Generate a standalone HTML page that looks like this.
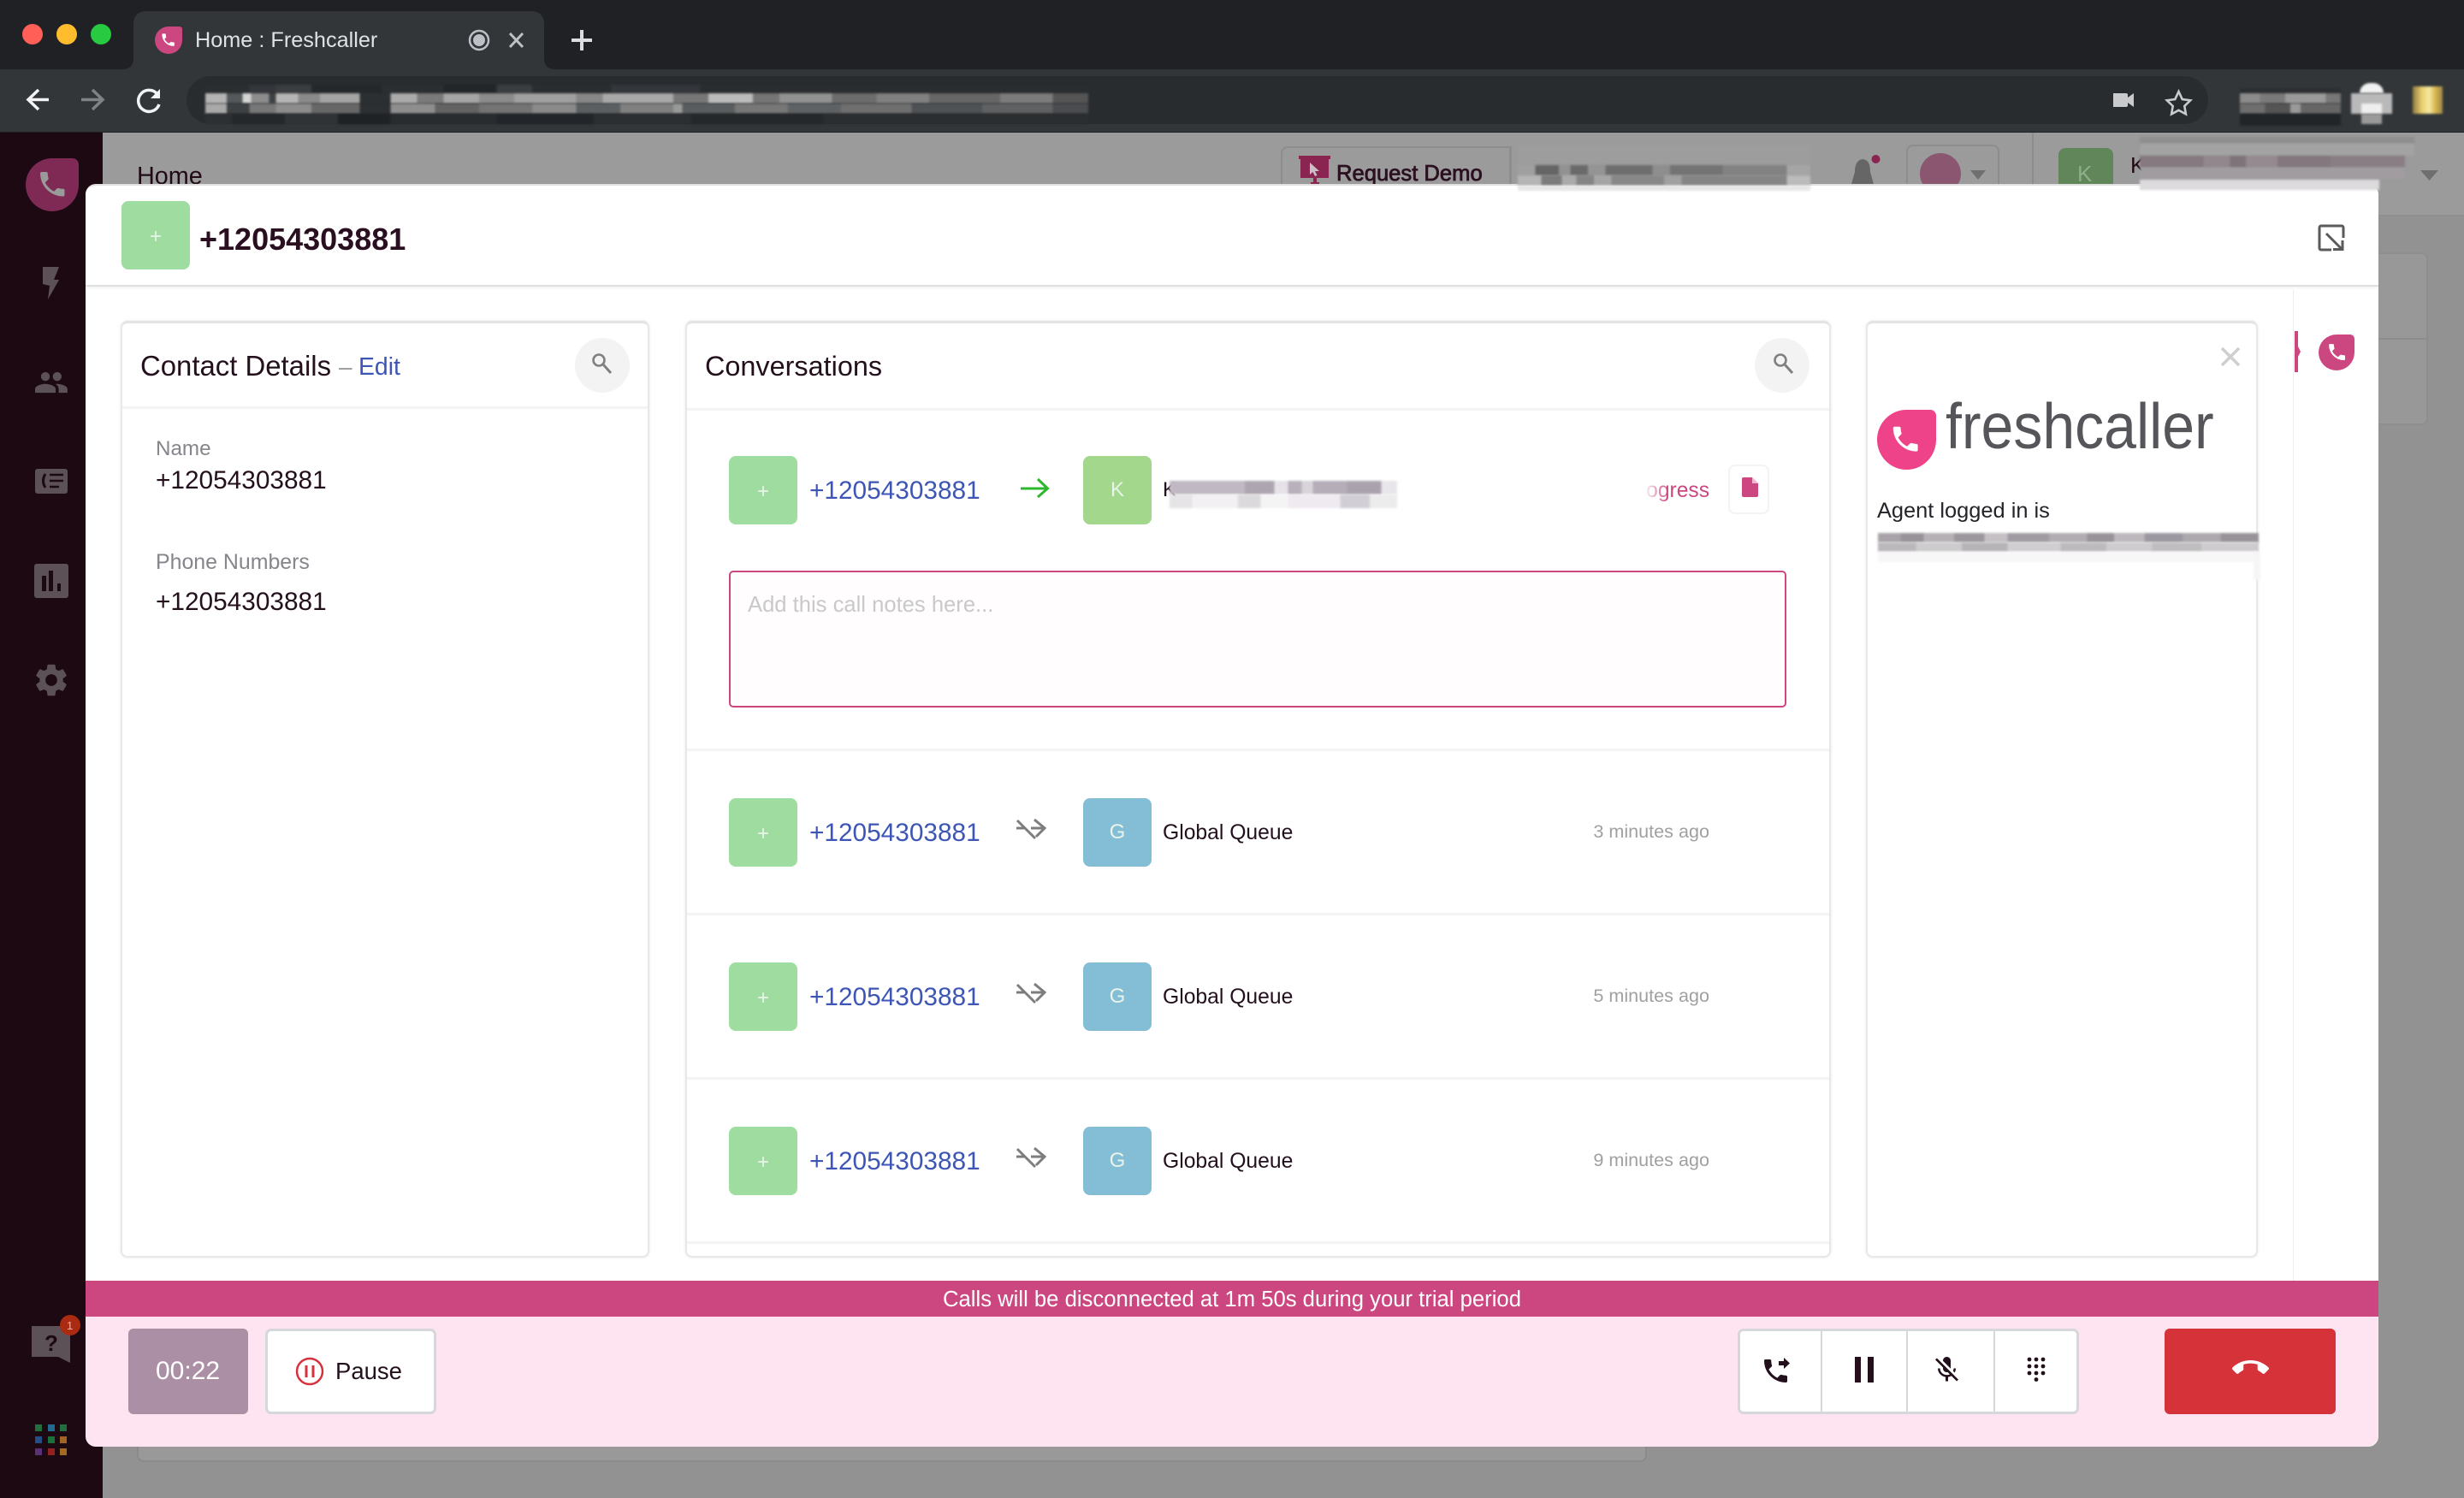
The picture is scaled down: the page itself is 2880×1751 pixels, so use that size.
<!DOCTYPE html>
<html lang="en"><head><meta charset="utf-8"><title>Home : Freshcaller</title>
<style>
html,body{margin:0;padding:0;background:#929292}
#p{position:relative;width:2880px;height:1751px;overflow:hidden;font-family:"Liberation Sans",Arial,sans-serif;color:#24101d;background:#929292}
#p div{position:absolute;box-sizing:border-box}
.t{position:absolute;white-space:nowrap;line-height:1}
.av{width:80px;height:80px;border-radius:8px;color:#e8f4ea;display:flex;align-items:center;justify-content:center;font-size:24px}
.g{background:#9edca0;padding-top:3px}.b{background:#84bdd6}.k{background:#a2d78c}
.blue{color:#3d55b5}
.lab{color:#85858c}
.card{background:#fff;border:2px solid #e8e8e8;border-top:3px solid #e4e4e4;border-radius:8px;box-shadow:0 0 3px rgba(0,0,0,.1)}
.sep{height:3px;background:#f3f3f3}
.sb{width:64px;height:64px;border-radius:50%;background:#f3f3f3}
.mz{filter:blur(1.3px)}
svg{position:absolute;left:0;top:0}
</style></head><body>
<div id="p">
<!-- browser chrome -->
<div style="left:0;top:0;width:2880px;height:81px;background:#202124"></div>
<div style="left:0;top:81px;width:2880px;height:73px;background:#323639"></div>
<div style="left:0;top:154px;width:2880px;height:1px;background:#1f2022"></div>
<div style="left:218px;top:89px;width:2363px;height:56px;border-radius:28px;background:#292c2f"></div>

<!-- url mosaic -->
<div class="mz" style="left:240px;top:99px;width:1032px;height:10px;background:linear-gradient(90deg,#2b2e31 0 5%,#33363a 0 8%,#3a3d40 0 12%,#25282b 0 20%,#2b2e31 0 27%,#232629 0 33%,#3a3d3f 0 37%,#2a2d30 0 46%,#33363a 0 56%,#2a2d30 0 100%)"></div>
<div class="mz" style="left:240px;top:109px;width:1032px;height:12px;background:linear-gradient(90deg,#b4b4b4 0 2.4%,#55585a 0 4.2%,#d5d5d5 0 5.2%,#8c8c8c 0 7.2%,#3e4143 0 8%,#b5b5b5 0 10.5%,#8a8a8a 0 13%,#a4a4a4 0 17.5%,#2c2f32 0 21%,#aaa 0 24%,#7a7a7a 0 27%,#a5a5a5 0 31%,#8b8b8b 0 35%,#a0a0a0 0 42%,#878787 0 45%,#a8a8a8 0 53%,#777 0 57%,#bbb 0 62%,#757575 0 65%,#929292 0 71%,#6c6c6c 0 76%,#808080 0 82%,#666 0 90%,#7c7c7c 0 96%,#555 0 100%)"></div>
<div class="mz" style="left:240px;top:121px;width:1032px;height:12px;background:linear-gradient(90deg,#a9a9a9 0 2.4%,#3e4143 0 5%,#777 0 8%,#8c8c8c 0 12%,#676767 0 17.5%,#2c2f32 0 21%,#8e8e8e 0 26%,#636363 0 31%,#747474 0 37%,#8a8a8a 0 42%,#5c5f61 0 47%,#808080 0 53%,#999 0 54%,#5a5d5f 0 60%,#777 0 66%,#5f6264 0 72%,#6f6f6f 0 80%,#4f5254 0 88%,#5f6163 0 96%,#4a4c4f 0 100%)"></div>
<div class="mz" style="left:240px;top:133px;width:1032px;height:12px;background:linear-gradient(90deg,#2d3033 0 3%,#25282b 0 9%,#303336 0 15%,#1f2225 0 21%,#292c2f 0 33%,#22252a 0 44%,#2c2f32 0 55%,#25282a 0 70%,#2b2e30 0 100%)"></div>
<!-- toolbar right mosaics -->
<div class="mz" style="left:2618px;top:103px;width:118px;height:12px;background:#2c2f32"></div>
<div class="mz" style="left:2618px;top:109px;width:118px;height:12px;background:linear-gradient(90deg,#8b8b8b 0 20%,#7a7a7a 0 45%,#9a9a9a 0 85%,#777 0 100%)"></div>
<div class="mz" style="left:2618px;top:121px;width:118px;height:12px;background:linear-gradient(90deg,#6e6e6e 0 25%,#555 0 50%,#9a9a9a 0 60%,#666 0 100%)"></div>
<div class="mz" style="left:2618px;top:133px;width:118px;height:14px;background:#222528"></div>
<div class="mz" style="left:2758px;top:97px;width:28px;height:12px;border-radius:14px 14px 0 0;background:#f2f2f2"></div>
<div class="mz" style="left:2748px;top:109px;width:48px;height:24px;background:#b9b9b9"></div>
<div class="mz" style="left:2760px;top:121px;width:24px;height:12px;background:#eee"></div>
<div class="mz" style="left:2760px;top:133px;width:24px;height:12px;background:#9a9a9a"></div>
<div class="mz" style="left:2820px;top:101px;width:35px;height:32px;background:linear-gradient(90deg,#8a7a40,#e8cd6e 30%,#f5e9a0 55%,#d9b851 75%,#9a8548)"></div>

<!-- background app -->
<div style="left:120px;top:155px;width:2760px;height:98px;background:#9b9b9b;border-bottom:2px solid #8f8f8f"></div>
<div style="left:2760px;top:295px;width:78px;height:202px;background:#989898;border:2px solid #8e8e8e;border-radius:8px"></div>
<div style="left:2760px;top:395px;width:78px;height:2px;background:#8c8c8c"></div>
<div style="left:160px;top:1500px;width:1765px;height:209px;background:#999;border:2px solid #8b8b8b;border-radius:8px"></div>
<span class="t" style="left:160px;top:192px;font-size:28.8px;color:#1f0a15">Home</span>
<div style="left:1497px;top:171px;width:270px;height:60px;border:2px solid #8d8d8d;border-radius:8px 0 0 0;border-bottom:0"></div>
<div style="left:1764px;top:172px;width:2px;height:50px;background:#8d8d8d"></div>
<span class="t" style="left:1562px;top:191px;font-size:25.6px;color:#2a1020;-webkit-text-stroke:.8px #2a1020">Request Demo</span>
<div style="left:2228px;top:169px;width:109px;height:60px;border:2px solid #8d8d8d;border-radius:8px 8px 0 0"></div>
<div style="left:2244px;top:179px;width:48px;height:48px;border-radius:50%;background:#8a5670"></div>
<div style="left:2375px;top:155px;width:2px;height:70px;background:#8c8c8c"></div>
<div style="left:2406px;top:173px;width:64px;height:64px;border-radius:8px;background:#60865a"></div>
<span class="t" style="left:2428px;top:190px;font-size:26px;color:#8fae8a">K</span>
<span class="t" style="left:2490px;top:180px;font-size:26px;color:#1f0a15">K</span>

<!-- sidebar -->
<div style="left:0;top:155px;width:120px;height:1596px;background:#1c0911"></div>
<div style="left:30px;top:185px;width:62px;height:62px;background:#7f2a55;border-radius:50% 12% 50% 50%"></div>
<div style="left:37px;top:1550px;width:45px;height:36px;background:#5b5157"></div>
<span class="t" style="left:52px;top:1557px;font-size:26px;font-weight:bold;color:#1c0911">?</span>
<div style="left:70px;top:1537px;width:24px;height:24px;border-radius:50%;background:#ab2a12"></div>
<span class="t" style="left:78px;top:1543px;font-size:13px;color:#e6b3a8">1</span>
<div style="left:41px;top:1665px;width:8px;height:8px;background:#226e40"></div><div style="left:56px;top:1665px;width:8px;height:8px;background:#236a90"></div><div style="left:70px;top:1665px;width:8px;height:8px;background:#226e40"></div>
<div style="left:41px;top:1679px;width:8px;height:8px;background:#274e84"></div><div style="left:56px;top:1679px;width:8px;height:8px;background:#19703c"></div><div style="left:70px;top:1679px;width:8px;height:8px;background:#a06423"></div>
<div style="left:41px;top:1693px;width:8px;height:8px;background:#573277"></div><div style="left:56px;top:1693px;width:8px;height:8px;background:#912222"></div><div style="left:70px;top:1693px;width:8px;height:8px;background:#a36a24"></div>

<!-- modal -->
<div style="left:100px;top:215px;width:2680px;height:1476px;background:#fff;border-radius:12px;overflow:hidden;border-top:2px solid #e0e0e0"></div>
<div style="left:100px;top:333px;width:2680px;height:2px;background:#dfdfdf"></div>
<div style="left:100px;top:335px;width:2680px;height:4px;background:linear-gradient(#f4f4f4,#fff)"></div>
<div class="av g" style="left:142px;top:235px">+</div>
<span class="t" style="left:233px;top:262px;font-size:36px;font-weight:bold;color:#2a0f20">+12054303881</span>

<!-- contact card -->
<div class="card" style="left:141px;top:375px;width:618px;height:1095px"></div>
<div class="sep" style="left:143px;top:475px;width:614px"></div>
<span class="t" style="left:164px;top:412px;font-size:32.9px;color:#24101d">Contact Details</span>
<span class="t" style="left:396px;top:415px;font-size:28px;color:#999">–</span>
<span class="t blue" style="left:419px;top:415px;font-size:28.4px">Edit</span>
<div class="sb" style="left:672px;top:395px"></div>
<span class="t lab" style="left:182px;top:513px;font-size:24.2px">Name</span>
<span class="t" style="left:182px;top:547px;font-size:29.8px">+12054303881</span>
<span class="t lab" style="left:182px;top:645px;font-size:24.9px">Phone Numbers</span>
<span class="t" style="left:182px;top:689px;font-size:29.8px">+12054303881</span>

<!-- conversations card -->
<div class="card" style="left:801px;top:375px;width:1339px;height:1095px;overflow:hidden"></div>
<div class="sep" style="left:803px;top:477px;width:1335px"></div>
<div class="sep" style="left:803px;top:875px;width:1335px"></div>
<div class="sep" style="left:803px;top:1067px;width:1335px"></div>
<div class="sep" style="left:803px;top:1259px;width:1335px"></div>
<div class="sep" style="left:803px;top:1451px;width:1335px"></div>
<span class="t" style="left:824px;top:412px;font-size:32.4px;color:#24101d">Conversations</span>
<div class="sb" style="left:2051px;top:395px"></div>

<div class="av g" style="left:852px;top:533px">+</div>
<span class="t blue" style="left:946px;top:559px;font-size:29.8px">+12054303881</span>
<div class="av k" style="left:1266px;top:533px">K</div>
<span class="t" style="left:1359px;top:561px;font-size:24.4px">K</span>
<div class="mz" style="left:1367px;top:562px;width:266px;height:16px;background:linear-gradient(90deg,#c0b8c2 0 33%,#ada5b0 0 46%,#e6e2e8 0 52%,#b8b0ba 0 58%,#d8d4da 0 63%,#b5adb8 0 78%,#aaa3ae 0 93%,#e8e6ea 0 100%)"></div>
<div class="mz" style="left:1367px;top:578px;width:266px;height:16px;background:linear-gradient(90deg,#e6e4e6 0 10%,#f2f0f2 0 30%,#dcd9dc 0 40%,#f5f4f5 0 52%,#eeeaef 0 75%,#d2ced6 0 88%,#ececec 0 100%)"></div>
<span class="t" style="right:882px;top:562px;font-size:24.6px;color:#cc4680">ogress</span>
<div style="left:1914px;top:555px;width:34px;height:36px;background:linear-gradient(90deg,#fff 20%,rgba(255,255,255,.1))"></div>
<div style="left:2020px;top:543px;width:48px;height:58px;border:2px solid #f3f3f3;border-radius:8px"></div>
<div style="left:852px;top:667px;width:1236px;height:160px;background:#fffdfe;border:2px solid #cc4680;border-radius:5px"></div>
<span class="t" style="left:874px;top:695px;font-size:25.6px;color:#c9c9c9">Add this call notes here...</span>

<div class="av g" style="left:852px;top:933px">+</div>
<span class="t blue" style="left:946px;top:959px;font-size:29.8px">+12054303881</span>
<div class="av b" style="left:1266px;top:933px">G</div>
<span class="t" style="left:1359px;top:962px;font-size:24.7px">Global Queue</span>
<span class="t" style="right:882px;top:961px;font-size:21.6px;color:#a0a0a0">3 minutes ago</span>

<div class="av g" style="left:852px;top:1125px">+</div>
<span class="t blue" style="left:946px;top:1151px;font-size:29.8px">+12054303881</span>
<div class="av b" style="left:1266px;top:1125px">G</div>
<span class="t" style="left:1359px;top:1154px;font-size:24.7px">Global Queue</span>
<span class="t" style="right:882px;top:1153px;font-size:21.6px;color:#a0a0a0">5 minutes ago</span>

<div class="av g" style="left:852px;top:1317px">+</div>
<span class="t blue" style="left:946px;top:1343px;font-size:29.8px">+12054303881</span>
<div class="av b" style="left:1266px;top:1317px">G</div>
<span class="t" style="left:1359px;top:1346px;font-size:24.7px">Global Queue</span>
<span class="t" style="right:882px;top:1345px;font-size:21.6px;color:#a0a0a0">9 minutes ago</span>

<!-- agent card -->
<div class="card" style="left:2181px;top:375px;width:458px;height:1095px"></div>
<div style="left:2194px;top:479px;width:69px;height:70px;background:#ee4289;border-radius:50% 10% 50% 50%"></div>
<span class="t" style="left:2274px;top:468px;font-size:68px;color:#55555a;transform:scaleY(1.1);transform-origin:left bottom">freshcaller</span>
<span class="t" style="left:2194px;top:585px;font-size:25.4px;color:#24232a">Agent logged in is</span>
<div class="mz" style="left:2195px;top:623px;width:445px;height:11px;background:linear-gradient(90deg,#a8a3a8 0 6%,#989399 0 12%,#b5b1b5 0 20%,#9c979d 0 28%,#c4c0c4 0 34%,#a09ba2 0 45%,#b0acb1 0 55%,#989399 0 62%,#bcb8bd 0 70%,#9c98a2 0 80%,#aca8ad 0 90%,#989399 0 100%)"></div>
<div class="mz" style="left:2195px;top:634px;width:445px;height:11px;background:linear-gradient(90deg,#bbb8bb 0 10%,#cdcbcd 0 22%,#b7b4b7 0 34%,#d0ced0 0 48%,#bdbabd 0 60%,#cecccf 0 72%,#bfbdbf 0 85%,#cecccf 0 100%)"></div>
<div class="mz" style="left:2195px;top:645px;width:445px;height:12px;background:#f8f7f8"></div>
<div class="mz" style="left:2634px;top:645px;width:8px;height:33px;background:#f6f6f6"></div>

<div style="left:2680px;top:339px;width:1px;height:1158px;background:#eeeeee"></div>
<div style="left:2682px;top:387px;width:4px;height:48px;background:#cc4680"></div>
<div style="left:2710px;top:391px;width:42px;height:42px;background:#cc4680;border-radius:50% 12% 50% 50%"></div>

<!-- bottom bars -->
<div style="left:100px;top:1497px;width:2680px;height:42px;background:#cc4680"></div>
<span class="t" style="left:1102px;top:1507px;font-size:25.66px;color:#fff">Calls will be disconnected at 1m 50s during your trial period</span>
<div style="left:100px;top:1539px;width:2680px;height:152px;background:#fde4f0;border-radius:0 0 14px 14px"></div>
<div style="left:150px;top:1553px;width:140px;height:100px;background:#ab8fa5;border-radius:6px"></div>
<span class="t" style="left:182px;top:1588px;font-size:30px;color:#fff">00:22</span>
<div style="left:310px;top:1553px;width:200px;height:100px;background:#fff;border:3px solid #d5d7da;border-radius:7px"></div>
<span class="t" style="left:392px;top:1589px;font-size:27.5px">Pause</span>
<div style="left:2031px;top:1553px;width:399px;height:100px;background:#fff;border:3px solid #d5d7da;border-radius:7px"></div>
<div style="left:2128px;top:1553px;width:2px;height:100px;background:#d5d7da"></div>
<div style="left:2228px;top:1553px;width:2px;height:100px;background:#d5d7da"></div>
<div style="left:2330px;top:1553px;width:2px;height:100px;background:#d5d7da"></div>
<div style="left:2530px;top:1553px;width:200px;height:100px;background:#d5323a;border-radius:6px"></div>

<!-- header mosaics over modal -->
<div class="mz" style="left:1774px;top:169px;width:342px;height:24px;background:#9d9d9d"></div>
<div class="mz" style="left:1774px;top:193px;width:342px;height:12px;background:linear-gradient(90deg,#a0a0a0 0 6%,#656565 0 14%,#929292 0 18%,#6a6a6a 0 24%,#949494 0 30%,#6e6e6e 0 46%,#8e8e8e 0 52%,#737373 0 70%,#828282 0 92%,#a5a5a5 0 100%)"></div>
<div class="mz" style="left:1774px;top:205px;width:342px;height:12px;background:linear-gradient(90deg,#b5b5b5 0 8%,#7c7c7c 0 15%,#aaa 0 20%,#858585 0 26%,#a5a5a5 0 32%,#888 0 50%,#a0a0a0 0 56%,#858585 0 92%,#bbb 0 100%)"></div>
<div class="mz" style="left:1774px;top:217px;width:342px;height:6px;background:#e6e6e6"></div>
<div class="mz" style="left:2501px;top:160px;width:321px;height:8px;background:#8f8f8f"></div>
<div class="mz" style="left:2501px;top:168px;width:321px;height:14px;background:#a3a3a3"></div>
<div class="mz" style="left:2501px;top:182px;width:310px;height:14px;background:linear-gradient(90deg,#867a80 0 24%,#92878c 0 34%,#7e7379 0 40%,#948a8f 0 52%,#84787e 0 72%,#8a7e85 0 100%)"></div>
<div class="mz" style="left:2501px;top:196px;width:310px;height:14px;background:#a09ca0"></div>
<div class="mz" style="left:2501px;top:210px;width:280px;height:12px;background:#dcdadc"></div>

<!-- icons -->
<svg width="2880" height="1751" viewBox="0 0 2880 1751" xmlns="http://www.w3.org/2000/svg">
<defs><path id="ph" d="M6.62 10.79c1.44 2.83 3.76 5.14 6.59 6.59l2.2-2.2c.27-.27.67-.36 1.02-.24 1.12.37 2.33.57 3.57.57.55 0 1 .45 1 1V20c0 .55-.45 1-1 1-9.39 0-17-7.61-17-17 0-.55.45-1 1-1h3.5c.55 0 1 .45 1 1 0 1.25.2 2.45.57 3.57.11.35.03.74-.25 1.02l-2.2 2.2z"/></defs>
<!-- tab -->
<path d="M143 81Q156 81 156 68V29Q156 13 172 13H620Q636 13 636 29V68Q636 81 649 81Z" fill="#323639"/>
<circle cx="38" cy="40" r="12" fill="#ff5f57"/><circle cx="78" cy="40" r="12" fill="#ffbd2e"/><circle cx="118" cy="40" r="12" fill="#28ca42"/>
<path d="M181 47a16 16 0 0 1 16-16h13a3 3 0 0 1 3 3v13a16 16 0 0 1-32 0z" fill="#cc4680"/>
<use href="#ph" transform="translate(187 37) scale(.8)" fill="#fff"/>
<circle cx="560" cy="47" r="11" fill="none" stroke="#bdc1c6" stroke-width="2.500"/><circle cx="560" cy="47" r="7" fill="#bdc1c6"/>
<path d="M596 39l15 16M611 39l-15 16" stroke="#bdc1c6" stroke-width="3" fill="none"/>
<path d="M680 35v24M668 47h24" stroke="#dcdde0" stroke-width="4" fill="none"/>
<!-- nav -->
<path d="M57 116.500H35M45 105L33 116.500L45 128" stroke="#f1f3f4" stroke-width="3.500" fill="none"/>
<path d="M95 116.500H119M108 105L120 116.500L108 128" stroke="#7f8386" stroke-width="3.500" fill="none"/>
<path d="M183 109A12.500 12.500 0 1 0 186 122" stroke="#f1f3f4" stroke-width="3.500" fill="none"/><path d="M176 115H187V104Z" fill="#f1f3f4"/>
<path d="M2470 109h15a2 2 0 0 1 2 2v3l7-5v16l-7-5v3a2 2 0 0 1-2 2h-15z" fill="#c9cacc"/>
<path d="M2546.500 107l4.200 9 9.500 1.300-6.900 6.700 1.600 9.400-8.400-4.500-8.400 4.500 1.600-9.400-6.900-6.700 9.500-1.300z" fill="none" stroke="#c9cacc" stroke-width="2.600"/>
<!-- header bg icons -->
<path d="M1518 182h37v4h-2v22h-33v-22h-2z" fill="#8a2450"/><path d="M1535 208h4v5h3v2h-10v-2h3z" fill="#8a2450"/>
<path d="M1531 190l11 10h-5l2.500 5-2.500 1-2.500-5-3.500 3z" fill="#c9c0c5"/>
<path d="M2177 186c8 1 9 8 9 15l4 14h-26l4-14c0-7 2-14 9-15z" fill="#666"/><circle cx="2192.500" cy="186" r="5" fill="#8a2450"/>
<path d="M2303 199h18l-9 11z" fill="#6f6f6f"/><path d="M2829 199h21l-10.500 12z" fill="#6f6f6f"/>
<!-- sidebar icons -->
<use href="#ph" transform="translate(42.300 196.300) scale(1.580)" fill="#9a9a9a"/>
<path d="M50 312H69L63 327H69L56 350L58 334L50 332Z" fill="#5b5157"/>
<path transform="translate(39.300 426.400) scale(1.72)" fill="#5b5157" d="M16 11c1.660 0 2.990-1.340 2.990-3S17.660 5 16 5c-1.660 0-3 1.340-3 3s1.340 3 3 3zm-8 0c1.660 0 2.990-1.340 2.990-3S9.660 5 8 5C6.340 5 5 6.340 5 8s1.340 3 3 3zm0 2c-2.330 0-7 1.170-7 3.500V19h14v-2.500c0-2.330-4.670-3.500-7-3.500zm8 0c-.29 0-.62.02-.97.05 1.160.84 1.970 1.970 1.970 3.450V19h6v-2.500c0-2.330-4.670-3.500-7-3.500z"/>
<rect x="41" y="548" width="38" height="29" rx="3" fill="#5b5157"/><path d="M53 554q-5 8 0 16" stroke="#1c0911" stroke-width="3" fill="none"/><path d="M58 555h16M58 562h16M58 569h11" stroke="#1c0911" stroke-width="2.500"/>
<rect x="40" y="659" width="40" height="40" rx="3" fill="#5b5157"/><path d="M49 673h5v18h-5zM57 667h5v24h-5zM67 682h4v9h-4z" fill="#1c0911"/>
<path transform="translate(37.200 772.200) scale(1.9)" fill="#5b5157" d="M19.140 12.940c.04-.3.06-.61.06-.94 0-.32-.02-.64-.07-.94l2.030-1.580c.18-.14.23-.41.12-.61l-1.920-3.320c-.12-.22-.37-.29-.59-.22l-2.390.96c-.5-.38-1.030-.7-1.620-.94l-.36-2.540c-.04-.24-.24-.41-.48-.41h-3.840c-.24 0-.43.17-.47.41l-.36 2.540c-.59.24-1.130.57-1.620.94l-2.390-.96c-.22-.08-.47 0-.59.22L2.740 8.870c-.12.21-.08.47.12.61l2.030 1.580c-.05.3-.09.63-.09.94s.02.64.07.94l-2.030 1.580c-.18.14-.23.41-.12.61l1.920 3.320c.12.22.37.29.59.22l2.390-.96c.5.38 1.030.7 1.620.94l.36 2.540c.05.24.24.41.48.41h3.840c.24 0 .44-.17.47-.41l.36-2.540c.59-.24 1.130-.56 1.620-.94l2.390.96c.22.08.47 0 .59-.22l1.920-3.320c.12-.22.07-.47-.12-.61l-2.010-1.580zM12 15.600c-1.980 0-3.600-1.620-3.600-3.600s1.620-3.600 3.600-3.600 3.600 1.620 3.600 3.600-1.620 3.600-3.600 3.600z"/>
<path d="M68 1586h14v7z" fill="#5b5157"/>
<!-- expand -->
<path d="M2725 292H2713a2 2 0 0 1-2-2V266a2 2 0 0 1 2-2H2737a2 2 0 0 1 2 2V278M2719 273L2737 291M2727 291.500H2738V281" fill="none" stroke="#5a5a5a" stroke-width="3"/>
<!-- search -->
<circle cx="700" cy="421" r="6.500" fill="none" stroke="#808080" stroke-width="2.600"/><path d="M705 426l9 10" stroke="#808080" stroke-width="3"/>
<circle cx="2081" cy="421" r="6.500" fill="none" stroke="#808080" stroke-width="2.600"/><path d="M2086 426l9 10" stroke="#808080" stroke-width="3"/>
<!-- arrows -->
<path d="M1193 571H1224M1213 560L1224.500 571L1213 581" fill="none" stroke="#2eb82e" stroke-width="3"/>
<g fill="none" stroke="#7d7d7d" stroke-width="3"><path d="M1188 968H1197M1205 968H1220M1189 959L1210 980M1209 958L1221 968L1211 978"/><path transform="translate(0 192)" d="M1188 968H1197M1205 968H1220M1189 959L1210 980M1209 958L1221 968L1211 978"/><path transform="translate(0 384)" d="M1188 968H1197M1205 968H1220M1189 959L1210 980M1209 958L1221 968L1211 978"/></g>
<path d="M2036 560a2 2 0 0 1 2-2h10l7 7v14a2 2 0 0 1-2 2h-15a2 2 0 0 1-2-2z" fill="#cc4680"/><path d="M2048 558v7h7z" fill="#f4b6d0"/>
<!-- agent -->
<path d="M2597 407l20 20M2617 407l-20 20" stroke="#cfcfcf" stroke-width="3.500"/>
<use href="#ph" transform="translate(2208 494) scale(1.6)" fill="#fff"/>
<path d="M2686 405l3 6-3 6z" fill="#cc4680"/>
<use href="#ph" transform="translate(2719 399) scale(1.05)" fill="#fff"/>
<!-- footer -->
<circle cx="362" cy="1603" r="15" fill="none" stroke="#d7323c" stroke-width="2.500"/><path d="M358 1596v14M366 1596v14" stroke="#d7323c" stroke-width="3"/>
<use href="#ph" transform="translate(2057.500 1584.500) scale(1.500)" fill="#24101d"/>
<path d="M2079 1591H2085V1587L2092 1593.500L2085 1600V1596H2079Z" fill="#24101d"/>
<path d="M2168 1586h7v30h-7zM2183 1586h7v30h-7z" fill="#24101d"/>
<path transform="translate(2257.500 1583) scale(1.500)" fill="#24101d" d="M19 11h-1.700c0 .74-.16 1.430-.43 2.050l1.230 1.230c.56-.98.9-2.090.9-3.280zm-4.020.17c0-.06.02-.11.02-.17V5c0-1.660-1.340-3-3-3S9 3.340 9 5v.18l5.980 5.990zM4.270 3L3 4.270l6.010 6.010V11c0 1.660 1.330 3 2.990 3 .22 0 .44-.03.65-.08l1.660 1.660c-.71.33-1.500.52-2.310.52-2.760 0-5.300-2.100-5.300-5.100H5c0 3.410 2.720 6.230 6 6.720V21h2v-3.280c.91-.13 1.770-.45 2.540-.9L19.730 21 21 19.730 4.270 3z"/>
<g fill="#24101d"><circle cx="2372" cy="1589" r="2.400"/><circle cx="2380" cy="1589" r="2.400"/><circle cx="2388" cy="1589" r="2.400"/><circle cx="2372" cy="1597" r="2.400"/><circle cx="2380" cy="1597" r="2.400"/><circle cx="2388" cy="1597" r="2.400"/><circle cx="2372" cy="1605" r="2.400"/><circle cx="2380" cy="1605" r="2.400"/><circle cx="2388" cy="1605" r="2.400"/><circle cx="2380" cy="1612.500" r="2.400"/></g>
<path transform="translate(2609 1577.500) scale(1.790)" fill="#fff" d="M12 9c-1.600 0-3.150.25-4.600.72v3.100c0 .39-.23.74-.56.9-.98.49-1.870 1.120-2.660 1.850-.18.18-.43.28-.7.28-.28 0-.53-.11-.71-.29L.29 13.080c-.18-.17-.29-.42-.29-.7 0-.28.11-.53.29-.71C3.340 8.780 7.460 7 12 7s8.660 1.780 11.710 4.670c.18.18.29.43.29.71 0 .28-.11.53-.29.71l-2.480 2.480c-.18.18-.43.29-.71.29-.27 0-.52-.11-.7-.28-.79-.74-1.690-1.360-2.670-1.850-.33-.16-.56-.5-.56-.9v-3.100C15.150 9.250 13.600 9 12 9z"/>
</svg>
<span class="t" style="left:228px;top:35px;font-size:25.25px;color:#dfe1e5">Home : Freshcaller</span>
</div>
</body></html>
